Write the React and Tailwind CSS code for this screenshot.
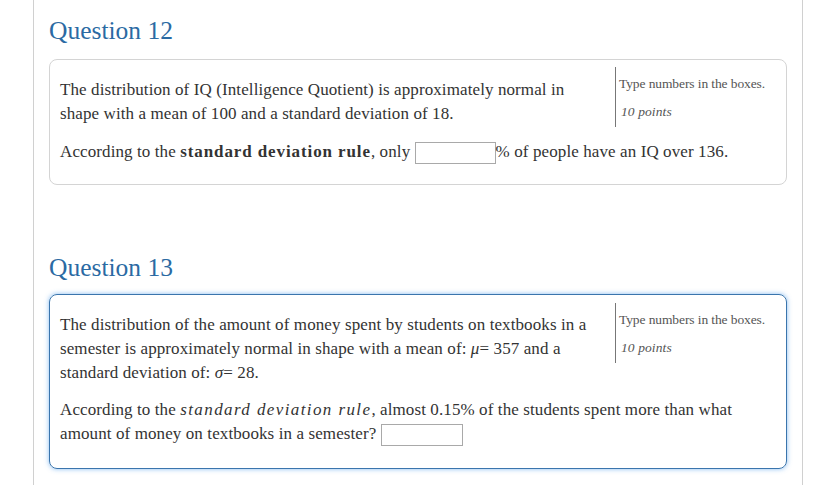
import React from 'react';

const serif = { fontFamily: '"Liberation Serif", "Times New Roman", serif' };

const SidePanel = () => (
  <div className="float-right ml-2 mt-0 w-[161px] border-l border-[#777] pl-[3px] text-[#555]">
    <p className="pt-[8px] text-[13.5px] leading-[18px] tracking-[-0.1px]">Type numbers in the boxes.</p>
    <p className="mt-[10px] pl-[2px] pb-[6px] text-[13.5px] italic leading-[18px]">10 points</p>
  </div>
);

const Blank = ({ w }) => (
  <input
    type="text"
    className={`${w} h-[22px] border border-[#a9a9a9] bg-white align-middle outline-none`}
  />
);

export default function App() {
  return (
    <div className="min-h-[485px] bg-white" style={serif}>
      <div className="ml-[33px] w-[770px] min-h-[485px] border-x border-[#d0d0d0] px-[15px] text-[#333]">
        {/* Question 12 */}
        <h2 className="pt-[16px] text-[25.5px] leading-[30px] text-[#2b6aa3]">Question 12</h2>
        <div className="mt-[13px] h-[126px] rounded-[8px] border border-[#d4d4d4] px-[10px] pt-[7px] text-[17px] leading-[24px] tracking-[0.1px]">
          <SidePanel />
          <p className="mt-[11px]">
            The distribution of IQ (Intelligence Quotient) is approximately normal in shape with a mean of 100 and a
            standard deviation of 18.
          </p>
          <p className="mt-[14px]">
            According to the <b className="tracking-[0.9px]">standard deviation rule</b>, only{' '}
            <Blank w="w-[81px]" />% of people have an IQ over 136.
          </p>
        </div>

        {/* Question 13 */}
        <h2 className="mt-[68px] text-[25.5px] leading-[30px] text-[#2b6aa3]">Question 13</h2>
        <div className="mt-[11px] h-[175px] rounded-[8px] border border-[#3a75ad] px-[10px] pt-[8px] text-[17px] leading-[24px] tracking-[0.1px] shadow-[0_0_5px_rgba(82,160,236,0.7)]">
          <SidePanel />
          <p className="mt-[10px]">
            The distribution of the amount of money spent by students on textbooks in a semester is approximately normal
            in shape with a mean of: <i>μ</i>= 357 and a standard deviation of: <i>σ</i>= 28.
          </p>
          <p className="mt-[13px]">
            According to the <i className="tracking-[1.4px]">standard deviation rule</i>, almost 0.15% of the students
            spent more than what
            <br />
            amount of money on textbooks in a semester? <Blank w="w-[82px]" />
          </p>
        </div>
      </div>
    </div>
  );
}
